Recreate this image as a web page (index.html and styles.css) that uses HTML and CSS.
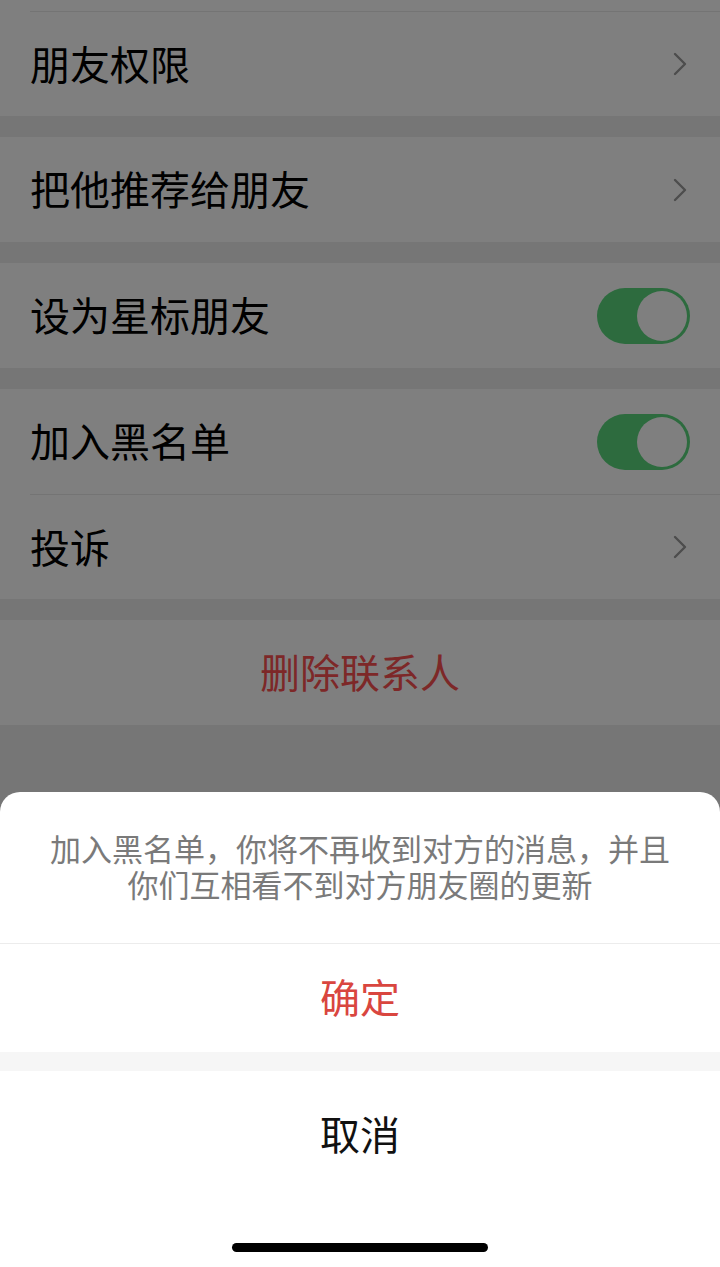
FILE: index.html
```html
<!DOCTYPE html>
<html lang="zh-CN">
<head>
    <meta charset="UTF-8">
    <meta name="viewport" content="width=device-width, initial-scale=1.0">
    <title>资料设置</title>
    <link rel="stylesheet" href="styles.css">
</head>
<body>

<main class="settings">
    <section class="group">
        <div class="cell-stub"></div>
        <div class="cell">
            <div class="cell-inner">
                <span class="cell-title">朋友权限</span>
                <svg class="chevron" viewBox="0 0 14 24" width="14" height="24">
                    <polyline points="2,2 12,12 2,22"></polyline>
                </svg>
            </div>
        </div>
    </section>

    <section class="group">
        <div class="cell">
            <div class="cell-inner">
                <span class="cell-title">把他推荐给朋友</span>
                <svg class="chevron" viewBox="0 0 14 24" width="14" height="24">
                    <polyline points="2,2 12,12 2,22"></polyline>
                </svg>
            </div>
        </div>
    </section>

    <section class="group">
        <div class="cell">
            <div class="cell-inner">
                <span class="cell-title">设为星标朋友</span>
                <span class="switch is-on"></span>
            </div>
        </div>
    </section>

    <section class="group">
        <div class="cell">
            <div class="cell-inner">
                <span class="cell-title">加入黑名单</span>
                <span class="switch is-on"></span>
            </div>
        </div>
        <div class="cell">
            <div class="cell-inner">
                <span class="cell-title">投诉</span>
                <svg class="chevron" viewBox="0 0 14 24" width="14" height="24">
                    <polyline points="2,2 12,12 2,22"></polyline>
                </svg>
            </div>
        </div>
    </section>

    <section class="group">
        <div class="cell cell-danger">删除联系人</div>
    </section>
</main>

<!-- action sheet shown after switching on the blacklist -->
<div class="mask"></div>
<div class="action-sheet">
    <p class="sheet-tip">加入黑名单，你将不再收到对方的消息，并且你们互相看不到对方朋友圈的更新</p>
    <div class="sheet-btn sheet-btn-warn">确定</div>
    <div class="sheet-gap"></div>
    <div class="sheet-btn sheet-btn-cancel">取消</div>
    <div class="home-bar">
        <span class="home-indicator"></span>
    </div>
</div>

</body>
</html>
```

FILE: styles.css
```css
body {
    font-family: "Noto Sans CJK SC", sans-serif;
    margin: 0;
    padding: 0;
    height: 1267px;
    overflow: hidden;
    background-color: #ededed;
    color: #000;
}
.settings {
    display: flex;
    flex-direction: column;
    gap: 21px;
}
.group {
    background: #fff;
}
.cell-stub {
    height: 11px;
}
.cell {
    display: flex;
    align-items: stretch;
    height: 105px;
    padding-left: 30px;
    box-sizing: border-box;
}
.cell-inner {
    flex: 1;
    display: flex;
    align-items: center;
    justify-content: space-between;
    padding-right: 30px;
}
.cell-stub + .cell .cell-inner,
.cell + .cell .cell-inner {
    border-top: 1px solid #e8e8e8;
}
.cell-title {
    font-size: 40px;
    line-height: 1;
    padding-bottom: 3px;
}
.chevron {
    margin-right: 3px;
    fill: none;
    stroke: #9a9a9a;
    stroke-width: 2.4;
    stroke-linecap: round;
    stroke-linejoin: round;
}
.switch {
    position: relative;
    width: 93px;
    height: 56px;
    border-radius: 28px;
    background: #e5e5e5;
}
.switch.is-on {
    background: #5ad67d;
}
.switch::after {
    content: "";
    position: absolute;
    top: 3px;
    left: 3px;
    width: 50px;
    height: 50px;
    border-radius: 50%;
    background: #fff;
}
.switch.is-on::after {
    left: auto;
    right: 3px;
}
.cell-danger {
    justify-content: center;
    align-items: center;
    padding: 0 0 3px;
    font-size: 40px;
    color: #fa5151;
}
.mask {
    position: fixed;
    inset: 0;
    background: rgba(0, 0, 0, 0.5);
}
.action-sheet {
    position: fixed;
    left: 0;
    right: 0;
    bottom: 0;
    background: #fff;
    border-radius: 20px 20px 0 0;
    text-align: center;
}
.sheet-tip {
    margin: 0;
    height: 152px;
    box-sizing: border-box;
    padding: 38px 45px 42px;
    font-size: 31px;
    line-height: 36px;
    color: #7a7a7a;
    border-bottom: 1px solid #ececec;
}
.sheet-btn {
    display: flex;
    align-items: center;
    justify-content: center;
    height: 108px;
    box-sizing: border-box;
    padding-bottom: 4px;
    font-size: 40px;
}
.sheet-btn-warn {
    color: #d9463f;
}
.sheet-gap {
    height: 19px;
    background: #f6f6f6;
}
.sheet-btn-cancel {
    height: 128px;
    color: #111;
}
.home-bar {
    display: flex;
    justify-content: center;
    height: 68px;
    padding-top: 44px;
    box-sizing: border-box;
}
.home-indicator {
    width: 256px;
    height: 9px;
    border-radius: 5px;
    background: #000;
}
```
